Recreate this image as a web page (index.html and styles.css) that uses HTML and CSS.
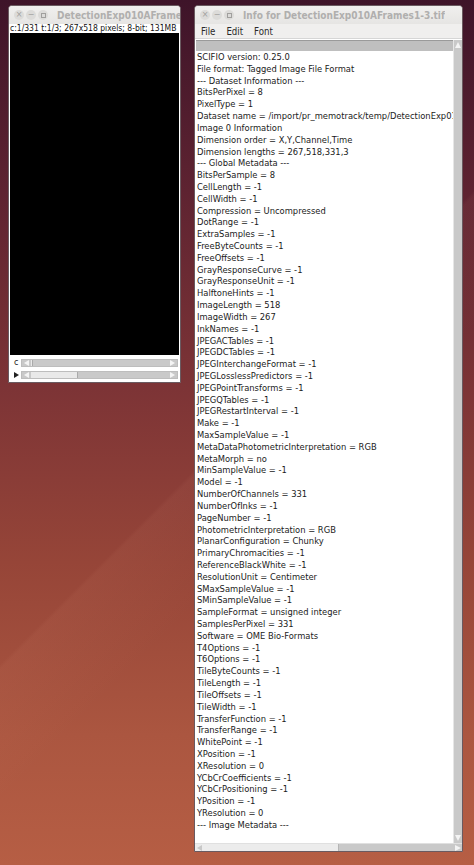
FILE: index.html
```html
<!DOCTYPE html>
<html>
<head>
<meta charset="utf-8">
<link rel="stylesheet" href="styles.css">
</head>
<body>
<div class="desktop">
  <div class="win win-img">
    <div class="titlebar">
      <div class="btns">
        <span class="btn">×</span><span class="btn">−</span><span class="btn sq"><i></i></span>
      </div>
      <div class="title">DetectionExp010AFrames1-3.tif</div>
    </div>
    <div class="info">c:1/331 t:1/3; 267x518 pixels; 8-bit; 131MB</div>
    <div class="canvas"></div>
    <div class="slider">
      <span class="lbl">c</span>
      <div class="sb">
        <span class="arr l"></span>
        <span class="thumb t1"></span>
        <span class="track"></span>
        <span class="arr r"></span>
      </div>
    </div>
    <div class="slider">
      <span class="lbl play"></span>
      <div class="sb">
        <span class="arr l"></span>
        <span class="thumb t2"></span>
        <span class="track"></span>
        <span class="arr r"></span>
      </div>
    </div>
  </div>

  <div class="win win-info">
    <div class="titlebar">
      <div class="btns">
        <span class="btn">×</span><span class="btn">−</span><span class="btn sq"><i></i></span>
      </div>
      <div class="title">Info for DetectionExp010AFrames1-3.tif</div>
    </div>
    <div class="menubar">
      <span class="mi">File</span><span class="mi">Edit</span><span class="mi">Font</span>
    </div>
    <div class="pane">
      <div class="main">
        <div class="header"></div>
        <div class="lines">
<div>SCIFIO version: 0.25.0</div>
<div>File format: Tagged Image File Format</div>
<div>--- Dataset Information ---</div>
<div>BitsPerPixel = 8</div>
<div>PixelType = 1</div>
<div>Dataset name = /import/pr_memotrack/temp/DetectionExp010AFrames1-3.tif</div>
<div>Image 0 Information</div>
<div>Dimension order = X,Y,Channel,Time</div>
<div>Dimension lengths = 267,518,331,3</div>
<div>--- Global Metadata ---</div>
<div>BitsPerSample = 8</div>
<div>CellLength = -1</div>
<div>CellWidth = -1</div>
<div>Compression = Uncompressed</div>
<div>DotRange = -1</div>
<div>ExtraSamples = -1</div>
<div>FreeByteCounts = -1</div>
<div>FreeOffsets = -1</div>
<div>GrayResponseCurve = -1</div>
<div>GrayResponseUnit = -1</div>
<div>HalftoneHints = -1</div>
<div>ImageLength = 518</div>
<div>ImageWidth = 267</div>
<div>InkNames = -1</div>
<div>JPEGACTables = -1</div>
<div>JPEGDCTables = -1</div>
<div>JPEGInterchangeFormat = -1</div>
<div>JPEGLosslessPredictors = -1</div>
<div>JPEGPointTransforms = -1</div>
<div>JPEGQTables = -1</div>
<div>JPEGRestartInterval = -1</div>
<div>Make = -1</div>
<div>MaxSampleValue = -1</div>
<div>MetaDataPhotometricInterpretation = RGB</div>
<div>MetaMorph = no</div>
<div>MinSampleValue = -1</div>
<div>Model = -1</div>
<div>NumberOfChannels = 331</div>
<div>NumberOfInks = -1</div>
<div>PageNumber = -1</div>
<div>PhotometricInterpretation = RGB</div>
<div>PlanarConfiguration = Chunky</div>
<div>PrimaryChromacities = -1</div>
<div>ReferenceBlackWhite = -1</div>
<div>ResolutionUnit = Centimeter</div>
<div>SMaxSampleValue = -1</div>
<div>SMinSampleValue = -1</div>
<div>SampleFormat = unsigned integer</div>
<div>SamplesPerPixel = 331</div>
<div>Software = OME Bio-Formats</div>
<div>T4Options = -1</div>
<div>T6Options = -1</div>
<div>TileByteCounts = -1</div>
<div>TileLength = -1</div>
<div>TileOffsets = -1</div>
<div>TileWidth = -1</div>
<div>TransferFunction = -1</div>
<div>TransferRange = -1</div>
<div>WhitePoint = -1</div>
<div>XPosition = -1</div>
<div>XResolution = 0</div>
<div>YCbCrCoefficients = -1</div>
<div>YCbCrPositioning = -1</div>
<div>YPosition = -1</div>
<div>YResolution = 0</div>
<div>--- Image Metadata ---</div>
        </div>
      </div>
      <div class="vscroll">
        <span class="varr up"></span>
        <span class="vtrack"></span>
        <span class="varr down"></span>
      </div>
    </div>
    <div class="hscroll">
      <span class="hthumb"></span>
      <span class="htrack"></span>
      <span class="harr"></span>
    </div>
  </div>
</div>
</body>
</html>
```

FILE: styles.css
```css
* { box-sizing: border-box; }
html, body { margin: 0; padding: 0; }
body {
  width: 474px;
  height: 865px;
  overflow: hidden;
  font-family: "DejaVu Sans", sans-serif;
}
.desktop {
  width: 474px;
  height: 865px;
  display: flex;
  align-items: flex-start;
  gap: 13px;
  padding: 5px 0 0 8px;
  background:
    linear-gradient(135deg, rgba(255,255,255,0) 49.6%, rgba(255,180,150,0.05) 50%, rgba(255,255,255,0) 60%),
    linear-gradient(180deg, #3e1429 0%, #5e2331 22%, #7d3436 45%, #964538 65%, #ab5640 85%, #b65e44 100%);
}
.win {
  background: #f2f1f0;
  border: 1px solid #6a5a60;
  border-radius: 4px 4px 0 0;
  display: flex;
  flex-direction: column;
  overflow: hidden;
}
.titlebar {
  height: 18px;
  flex: none;
  display: flex;
  align-items: center;
  background: linear-gradient(#f0efee, #e6e5e3);
  padding-left: 5px;
}
.btns { display: flex; gap: 2px; flex: none; }
.btn {
  width: 10px;
  height: 10px;
  overflow: hidden;
  border-radius: 50%;
  background: #dcdbd9;
  color: #a09f9d;
  font: 8px/10px "DejaVu Sans", sans-serif;
  text-align: center;
  display: flex;
  align-items: center;
  justify-content: center;
}
.btn.sq i {
  width: 5px; height: 5px;
  border: 1px solid #a09f9d;
}
.title {
  margin-left: 9px;
  font: bold 10px "DejaVu Sans", sans-serif;
  font-stretch: condensed;
  color: #b0afae;
  white-space: nowrap;
  overflow: hidden;
}
/* image window */
.win-img {
  width: 173px;
  height: 378px;
  background: #fff;
}
.info {
  height: 9px;
  flex: none;
  padding: 0 0 0 1px;
  font: 8.5px/9px "DejaVu Sans", sans-serif;
  font-stretch: condensed;
  color: #111;
  white-space: nowrap;
  overflow: hidden;
  background: #fff;
}
.canvas {
  flex: none;
  height: 322px;
  margin: 0 1px;
  background: #000;
}
.slider {
  flex: none;
  display: flex;
  align-items: center;
  height: 8px;
  margin-top: 4px;
  padding: 0 2px 0 5px;
}
.lbl {
  width: 7px;
  font: 8px/8px "DejaVu Sans", sans-serif;
  color: #222;
}
.lbl.play {
  width: 0; height: 0;
  border-left: 5px solid #222;
  border-top: 3px solid transparent;
  border-bottom: 3px solid transparent;
  margin-right: 2px;
}
.sb {
  flex: 1;
  display: flex;
  height: 8px;
  background: #c9c9c9;
  border: 1px solid #bdbdbd;
}
.arr { width: 9px; flex: none; position: relative; }
.arr.l::after, .arr.r::after {
  content: "";
  position: absolute;
  top: 0;
  width: 0; height: 0;
  border-top: 3px solid transparent;
  border-bottom: 3px solid transparent;
}
.arr.l::after { left: 2px; border-right: 5px solid #f4f4f4; }
.arr.r::after { right: 2px; border-left: 5px solid #f4f4f4; }
.thumb { flex: none; background: #e9e9e9; border-right: 1px solid #aaa; }
.thumb.t1 { width: 2px; }
.thumb.t2 { width: 47px; }
.track { flex: 1; }

/* info window */
.win-info {
  width: 269px;
  height: 847px;
}
.menubar {
  height: 15px;
  flex: none;
  display: flex;
  align-items: center;
  background: #f0efee;
  border-bottom: 1px solid #d6d6d6;
  padding-left: 6px;
  gap: 11px;
  font: 9.6px "DejaVu Sans", sans-serif;
  font-stretch: condensed;
  color: #2a2a2a;
}
.pane {
  flex: none;
  height: 804px;
  display: flex;
  background: #fff;
  padding-left: 1px;
}
.main {
  flex: 1;
  min-width: 0;
  overflow: hidden;
  padding-top: 1px;
}
.header {
  height: 11px;
  background: #bfbfbf;
  border-top: 1px solid #9a9a9a;
}
.lines {
  padding-left: 1px;
  font: 9.3px/11.82px "DejaVu Sans", sans-serif;
  font-stretch: condensed;
  color: #1a1a1a;
  white-space: nowrap;
}
.vscroll {
  width: 9px;
  flex: none;
  display: flex;
  flex-direction: column;
  background: #c9c9c9;
  border-left: 1px solid #e6e6e6;
  margin-top: 1px;
}
.varr { height: 10px; flex: none; position: relative; }
.varr::after {
  content: "";
  position: absolute;
  left: 1px;
  width: 0; height: 0;
  border-left: 3px solid transparent;
  border-right: 3px solid transparent;
}
.varr.up::after { top: 2px; border-bottom: 6px solid #f4f4f4; }
.varr.down::after { bottom: 2px; border-top: 6px solid #f4f4f4; }
.vtrack { flex: 1; }
.hscroll {
  flex: none;
  height: 9px;
  display: flex;
  background: #c9c9c9;
  border-top: 1px solid #e0e0e0;
}
.hthumb {
  width: 144px;
  flex: none;
  background: #ececec;
  border-right: 1px solid #b5b5b5;
  position: relative;
}
.hthumb::after {
  content: "";
  position: absolute;
  left: 2px; top: 1px;
  width: 0; height: 0;
  border-top: 3px solid transparent;
  border-bottom: 3px solid transparent;
  border-right: 5px solid #c8c8c8;
}
.htrack { flex: 1; }
.harr { width: 9px; flex: none; position: relative; }
.harr::after {
  content: "";
  position: absolute;
  right: 1px; top: 1px;
  width: 0; height: 0;
  border-top: 3px solid transparent;
  border-bottom: 3px solid transparent;
  border-left: 6px solid #f4f4f4;
}
```
